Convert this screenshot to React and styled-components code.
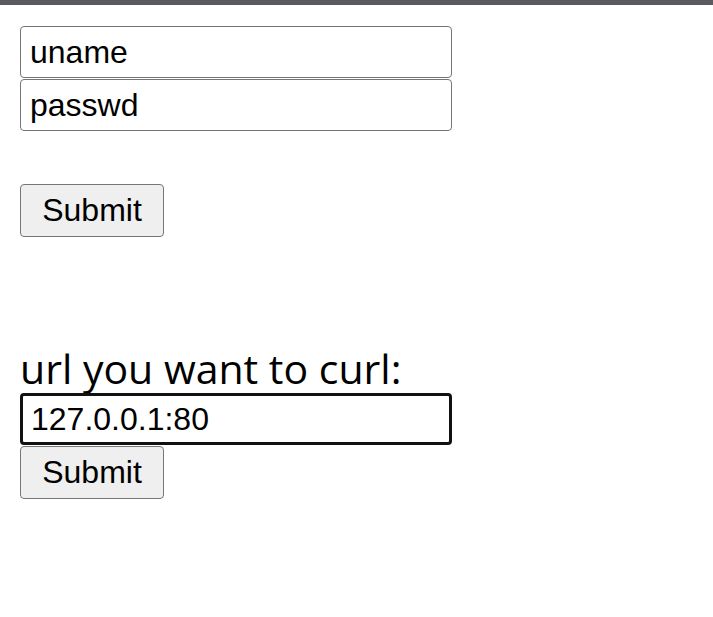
import React from 'react'
import styled, { createGlobalStyle } from 'styled-components'

const GlobalStyle = createGlobalStyle`
  html, body {
    margin: 0;
    padding: 0;
    background: #fff;
  }
`;

const TopBar = styled.div`
  height: 5px;
  background: #5a5a5e;
`;

const Page = styled.div`
  padding: 21px 20px 0 20px;
  display: flex;
  flex-direction: column;
`;

const Form = styled.form`
  display: flex;
  flex-direction: column;
  align-items: flex-start;
  gap: ${props => props.gap || 0}px;
`;

const Input = styled.input`
  box-sizing: border-box;
  width: 432px;
  height: 52px;
  font-family: "Liberation Sans", Arial, sans-serif;
  font-size: 32px;
  color: #000;
  background: #fff;
  border: ${props => props.bold ? '3px solid #111' : '1px solid #767676'};
  padding: 0 0 0 ${props => props.bold ? '8px' : '9px'};
  border-radius: 4px;
  outline: none;
`;

const Button = styled.button`
  box-sizing: border-box;
  width: 144px;
  height: 53px;
  margin-top: ${props => props.top || 0}px;
  font-family: "Liberation Sans", Arial, sans-serif;
  font-size: 32px;
  color: #000;
  background: #efefef;
  border: 1px solid #767676;
  border-radius: 4px;
  padding: 0;
`;

const Label = styled.div`
  margin-top: 106px;
  font-family: "Open Sans", sans-serif;
  font-size: 41px;
  line-height: 50px;
  color: #000;
`;

export default function App() {
  return (
    <>
      <GlobalStyle />
      <TopBar />
      <Page>
        <Form gap={1} onSubmit={e => e.preventDefault()}>
          <Input defaultValue="uname" />
          <Input defaultValue="passwd" />
          <Button top={52}>Submit</Button>
        </Form>
        <Label>url you want to curl:</Label>
        <Form onSubmit={e => e.preventDefault()}>
          <Input bold defaultValue="127.0.0.1:80" />
          <Button top={1}>Submit</Button>
        </Form>
      </Page>
    </>
  )
}
